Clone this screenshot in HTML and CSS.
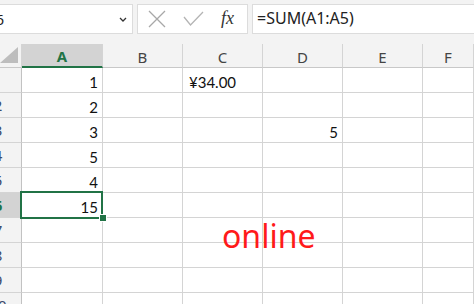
FILE: index.html
```html
<!DOCTYPE html>
<html lang="en">
  <head>
    <meta charset="UTF-8" />
    <meta name="viewport" content="width=device-width, initial-scale=1.0" />
    <title>Sheet</title>
    <link rel="stylesheet" href="styles.css">
  </head>
  <body>
    <div class="toolbar">
      <div class="namebox">
        <span class="name">A6</span>
        <svg class="chev" width="8" height="5" viewBox="0 0 8 5">
          <path d="M1 1 L4 4 L7 1" fill="none" stroke="#333" stroke-width="1.3" />
        </svg>
      </div>
      <div class="fbuttons">
        <svg width="20" height="20" viewBox="0 0 20 20">
          <path d="M2 2 L18 18 M18 2 L2 18" stroke="#a8a8a8" stroke-width="1.3" fill="none" />
        </svg>
        <svg width="24" height="20" viewBox="0 0 24 20">
          <path d="M2 8 L8.5 16 L21 3" stroke="#b4b4b4" stroke-width="1.3" fill="none" />
        </svg>
        <span class="fx">fx</span>
      </div>
      <div class="finput">=SUM(A1:A5)</div>
    </div>

    <div class="sheet">
      <div class="corner">
        <svg width="18" height="16" viewBox="0 0 18 16">
          <polygon points="0,16 18,16 18,0" fill="#bdbdbd" />
        </svg>
      </div>
      <div class="colhead sel">A</div>
      <div class="colhead">B</div>
      <div class="colhead">C</div>
      <div class="colhead">D</div>
      <div class="colhead">E</div>
      <div class="colhead">F</div>

      <div class="rowhead"><span>1</span></div>
      <div class="cell num">1</div>
      <div class="cell"></div>
      <div class="cell">¥34.00</div>
      <div class="cell"></div>
      <div class="cell"></div>
      <div class="cell"></div>

      <div class="rowhead"><span>2</span></div>
      <div class="cell num">2</div>
      <div class="cell"></div>
      <div class="cell"></div>
      <div class="cell"></div>
      <div class="cell"></div>
      <div class="cell"></div>

      <div class="rowhead"><span>3</span></div>
      <div class="cell num">3</div>
      <div class="cell"></div>
      <div class="cell"></div>
      <div class="cell num">5</div>
      <div class="cell"></div>
      <div class="cell"></div>

      <div class="rowhead"><span>4</span></div>
      <div class="cell num">5</div>
      <div class="cell"></div>
      <div class="cell"></div>
      <div class="cell"></div>
      <div class="cell"></div>
      <div class="cell"></div>

      <div class="rowhead"><span>5</span></div>
      <div class="cell num">4</div>
      <div class="cell"></div>
      <div class="cell"></div>
      <div class="cell"></div>
      <div class="cell"></div>
      <div class="cell"></div>

      <div class="rowhead sel"><span>6</span></div>
      <div class="cell num active">15</div>
      <div class="cell"></div>
      <div class="cell"></div>
      <div class="cell"></div>
      <div class="cell"></div>
      <div class="cell"></div>

      <div class="rowhead"><span>7</span></div>
      <div class="cell"></div>
      <div class="cell"></div>
      <div class="cell"></div>
      <div class="cell"></div>
      <div class="cell"></div>
      <div class="cell"></div>

      <div class="rowhead"><span>8</span></div>
      <div class="cell"></div>
      <div class="cell"></div>
      <div class="cell"></div>
      <div class="cell"></div>
      <div class="cell"></div>
      <div class="cell"></div>

      <div class="rowhead"><span>9</span></div>
      <div class="cell"></div>
      <div class="cell"></div>
      <div class="cell"></div>
      <div class="cell"></div>
      <div class="cell"></div>
      <div class="cell"></div>

      <div class="rowhead"><span>10</span></div>
      <div class="cell"></div>
      <div class="cell"></div>
      <div class="cell"></div>
      <div class="cell"></div>
      <div class="cell"></div>
      <div class="cell"></div>
    </div>

    <div class="shape">online</div>
  </body>
</html>
```

FILE: styles.css
```css
body {
  margin: 0;
  width: 474px;
  height: 304px;
  overflow: hidden;
  font-family: "Noto Sans", sans-serif;
  color: #222;
  background: #fff;
  position: relative;
}
.toolbar {
  height: 44px;
  box-sizing: border-box;
  padding-top: 4px;
  background: #f3f3f3;
  display: flex;
  align-items: flex-start;
  gap: 4px;
}
.namebox {
  width: 133px;
  height: 30px;
  box-sizing: border-box;
  background: #fff;
  border: 1px solid #dcdcdc;
  border-left: none;
  display: flex;
  align-items: center;
  justify-content: space-between;
  padding-right: 5px;
  overflow: hidden;
  font-size: 15px;
}
.namebox .name {
  margin-left: -14px;
}
.fbuttons {
  width: 111px;
  height: 30px;
  box-sizing: border-box;
  background: #fff;
  border: 1px solid #dcdcdc;
  display: flex;
  align-items: center;
  padding-left: 9px;
  gap: 15px;
}
.fx {
  font-family: "Liberation Serif", serif;
  font-style: italic;
  font-size: 18px;
  color: #333;
  margin-top: -2px;
}
.finput {
  flex: 1;
  height: 30px;
  box-sizing: border-box;
  background: #fff;
  border: 1px solid #dcdcdc;
  border-right: none;
  padding-left: 4px;
  font-size: 16px;
  line-height: 27px;
  color: #222;
}
.sheet {
  display: grid;
  grid-template-columns: 22px 81px 80px 80px 80px 80px 1fr;
  grid-template-rows: 24px;
  grid-auto-rows: 25px;
}
.corner {
  background: #f3f3f3;
  border-right: 1px solid #d4d4d4;
  border-bottom: 1px solid #c8c8c8;
  padding-top: 3px;
  box-sizing: border-box;
  overflow: hidden;
}
.corner svg {
  display: block;
}
.colhead {
  background: #f3f3f3;
  border-right: 1px solid #d4d4d4;
  border-bottom: 1px solid #c8c8c8;
  display: flex;
  align-items: center;
  justify-content: center;
  font-size: 15px;
  color: #444;
  padding-top: 2px;
}
.colhead.sel {
  background: #d3d3d3;
  color: #217346;
  font-weight: bold;
  border-bottom: 2px solid #217346;
}
.rowhead {
  background: #f3f3f3;
  border-right: 1px solid #c2c2c2;
  border-bottom: 1px solid #d4d4d4;
  overflow: hidden;
  display: flex;
  align-items: center;
  font-size: 15px;
  color: #3a4a6a;
}
.rowhead span {
  flex: none;
  width: 44px;
  margin-left: -24px;
  text-align: center;
}
.rowhead.sel {
  background: #d3d3d3;
  color: #217346;
  font-weight: bold;
}
.cell {
  border-right: 1px solid #d4d4d4;
  border-bottom: 1px solid #d4d4d4;
  display: flex;
  align-items: flex-end;
  padding: 0 4px 2px 6px;
  font-family: "Lato", sans-serif;
  font-size: 15px;
  line-height: 1;
  color: #111;
  white-space: nowrap;
}
.cell.num {
  justify-content: flex-end;
}
.cell.active {
  position: relative;
}
.cell.active::after {
  content: "";
  position: absolute;
  top: -2px;
  left: -2px;
  right: -1px;
  bottom: -2px;
  border: 2px solid #217346;
}
.cell.active::before {
  content: "";
  position: absolute;
  right: -5px;
  bottom: -5px;
  width: 6px;
  height: 6px;
  background: #217346;
  border: 1px solid #fff;
  z-index: 1;
}
.shape {
  position: absolute;
  left: 222px;
  top: 216px;
  font-family: "Noto Sans", sans-serif;
  font-size: 32px;
  color: #ff1a1a;
  line-height: 40px;
}
```
